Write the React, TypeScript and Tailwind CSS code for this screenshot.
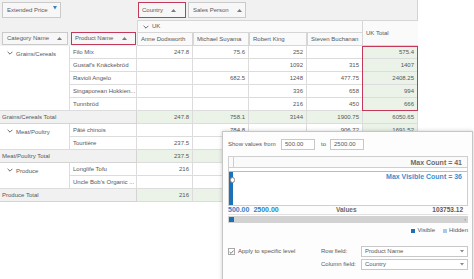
import React from "react";

type Group = {
  cat: string;
  items: string[][];
  total: string[];
};

const groups: Group[] = [
  {
    cat: "Grains/Cereals",
    items: [
      ["Filo Mix", "247.8", "75.6", "252", "", "575.4"],
      ["Gustaf's Knäckebröd", "", "", "1092", "315", "1407"],
      ["Ravioli Angelo", "", "682.5", "1248", "477.75", "2408.25"],
      ["Singaporean Hokkien...", "", "", "336", "658", "994"],
      ["Tunnbröd", "", "", "216", "450", "666"],
    ],
    total: ["Grains/Cereals Total", "247.8", "758.1", "3144", "1900.75", "6050.65"],
  },
  {
    cat: "Meat/Poultry",
    items: [
      ["Pâté chinois", "", "784.8", "", "906.72", "1691.52"],
      ["Tourtière", "237.5", "", "", "", ""],
    ],
    total: ["Meat/Poultry Total", "237.5", "", "", "", ""],
  },
  {
    cat: "Produce",
    items: [
      ["Longlife Tofu", "216", "", "", "", ""],
      ["Uncle Bob's Organic ...", "", "", "", "", ""],
    ],
    total: ["Produce Total", "216", "", "", "", ""],
  },
];

const spans: Record<number, string> = { 2: "row-span-2", 5: "row-span-5" };
const cols = "grid-cols-[70px_67px_56px_56px_58px_56px_55px]";

function Chevron() {
  return (
    <svg width="6" height="4" viewBox="0 0 6 4" className="shrink-0">
      <polyline points="0.6,0.8 3,3.2 5.4,0.8" fill="none" stroke="#6a6a6a" strokeWidth="1" />
    </svg>
  );
}

function SortUp() {
  return (
    <svg width="5" height="3" viewBox="0 0 5 3" className="shrink-0">
      <polygon points="0,3 2.5,0 5,3" fill="#7b7b7b" />
    </svg>
  );
}

function DropArrow() {
  return (
    <svg width="4" height="3" viewBox="0 0 4 3" className="shrink-0">
      <polygon points="0,0 4,0 2,2.5" fill="#888" />
    </svg>
  );
}

function Cell({ v, green }: { v: string; green?: boolean }) {
  return (
    <div
      className={`border-r border-b border-[#dcdcdc] pr-[3px] text-right leading-[12px] ${
        green ? "bg-[#ebf2e8]" : "bg-white"
      }`}
    >
      {v}
    </div>
  );
}

export default function App() {
  return (
    <div className="relative h-[279px] w-[474px] overflow-hidden bg-white font-['Liberation_Sans',Arial,sans-serif] text-[6px] text-[#575757]">
      {/* header block */}
      <div className={`grid w-[418px] ${cols} grid-rows-[20px_13px_13px] border-r border-[#d2d2d2] bg-[#f1f1f1]`}>
        <div className="col-start-1 col-end-3 row-start-1 flex items-start pl-[2px] pt-[2px]">
          <div className="flex h-[16px] w-[59px] items-center justify-between border border-[#cacaca] bg-[#f7f7f7] pl-[4px] pr-[3px]">
            <span>Extended Price</span>
            <svg width="4" height="4" viewBox="0 0 4 4" className="-mt-[5px]">
              <polygon points="0,0 4,0 2,3.5" fill="#3b7fc4" />
            </svg>
          </div>
        </div>
        <div className="col-start-3 col-end-8 row-start-1 flex items-start gap-[2px] pt-[2px] pl-[1px]">
          <div className="flex h-[16px] w-[48px] items-center gap-[8px] border-[1.5px] border-[#c4385a] bg-[#f7f7f7] pl-[3px]">
            <span>Country</span>
            <SortUp />
          </div>
          <div className="flex h-[16px] w-[58px] items-center gap-[8px] border border-[#cacaca] bg-[#f7f7f7] pl-[4px]">
            <span>Sales Person</span>
            <SortUp />
          </div>
        </div>
        <div className="col-start-3 col-end-7 row-start-2 flex items-center gap-[3px] border border-[#d6d6d6] bg-[#fafafa] pl-[5px]">
          <Chevron />
          <span>UK</span>
        </div>
        <div className="col-start-7 col-end-8 row-start-2 row-end-4 flex items-center border-t border-b border-[#d6d6d6] bg-[#fafafa] pl-[3px]">
          UK Total
        </div>
        <div className="col-start-1 row-start-3 flex items-start pl-[2px] -mt-[1px]">
          <div className="flex h-[13px] w-[66px] items-center gap-[8px] border border-[#cacaca] bg-[#f7f7f7] pl-[4px]">
            <span>Category Name</span>
            <SortUp />
          </div>
        </div>
        <div className="col-start-2 row-start-3 flex items-start pl-[1px] -mt-[1px]">
          <div className="flex h-[13px] w-[65px] items-center gap-[9px] border-[1.5px] border-[#c4385a] bg-[#f7f7f7] pl-[3px]">
            <span>Product Name</span>
            <SortUp />
          </div>
        </div>
        {["Anne Dodsworth", "Michael Suyama", "Robert King", "Steven Buchanan"].map((n) => (
          <div key={n} className="row-start-3 flex items-center border-r border-b border-l border-[#d6d6d6] bg-[#fafafa] pl-[3px]">
            {n}
          </div>
        ))}
      </div>

      {/* data block */}
      <div className="relative w-[418px]">
        <div className={`grid ${cols} auto-rows-[13px] border-r border-[#d2d2d2]`}>
          {groups.map((g) => (
            <React.Fragment key={g.cat}>
              <div className={`${spans[g.items.length]} flex items-start gap-[3px] border-r border-b border-[#dcdcdc] bg-white pl-[7px] pt-[4px]`}>
                <div className="pt-[1px]">
                  <Chevron />
                </div>
                <span>{g.cat}</span>
              </div>
              {g.items.map((r) => (
                <React.Fragment key={r[0]}>
                  <div className="overflow-hidden whitespace-nowrap border-r border-b border-[#dcdcdc] bg-white pl-[3px] leading-[12px]">
                    {r[0]}
                  </div>
                  {r.slice(1).map((v, i) => (
                    <Cell key={i} v={v} green={i === 4} />
                  ))}
                </React.Fragment>
              ))}
              <div className="col-span-2 border-b border-r border-[#d4d4d4] bg-[#f1f1f1] pl-[2px] leading-[12px]">
                {g.total[0]}
              </div>
              {g.total.slice(1).map((v, i) => (
                <Cell key={i} v={v} green />
              ))}
            </React.Fragment>
          ))}
        </div>
        <div className="pointer-events-none absolute left-[362px] top-0 h-[65px] w-[56px] border-[1.5px] border-[#c4385a]" />
      </div>

      {/* filter popup */}
      <div className="absolute left-[222px] top-[131px] flex h-[152px] w-[251px] flex-col border border-[#c6c6c6] bg-[#fdfdfd] pl-[5px] shadow-[0_0_4px_rgba(0,0,0,0.2)]">
        <div className="mt-[7px] flex items-center">
          <span className="w-[53px]">Show values from</span>
          <div className="flex h-[11px] w-[34px] items-center border border-[#c8c8c8] bg-white pl-[3px]">500.00</div>
          <span className="w-[15px] pl-[6px]">to</span>
          <div className="flex h-[11px] w-[34px] items-center border border-[#c8c8c8] bg-white pl-[3px]">2500.00</div>
        </div>

        <div className="mt-[6px] w-[240px] border border-[#cfcfcf] bg-white">
          <div className="flex h-[11px] border-b border-[#cfcfcf] bg-[#fafafa]">
            <div className="w-[5px] border-r border-[#cfcfcf]" />
            <div className="flex-1 pr-[5px] text-right text-[7px] font-bold leading-[11px] text-[#6a6a6a]">
              Max Count = 41
            </div>
          </div>
          <div className="relative h-[37px]">
            <div className="absolute left-0 right-0 top-[3px] border-t border-[#a6c2dc]" />
            <div className="absolute left-0 top-[4px] h-[33px] w-[4px] bg-[#1b72b8]" />
            <div className="absolute left-[1px] top-[9px] h-[6px] w-[5px] rounded-full border border-[#8a8a8a] bg-white" />
            <div className="pr-[5px] pt-[4px] text-right text-[7px] font-bold leading-[9px] text-[#3a8fd0]">
              Max Visible Count = 36
            </div>
          </div>
        </div>

        <div className="flex h-[9px] w-[240px] items-center border-b border-[#e2e2e2]">
          <div className="flex w-[108px] gap-[4px] text-[7px] font-bold text-[#2f84c6]">
            <span>500.00</span>
            <span>2500.00</span>
          </div>
          <span className="text-[6.5px] font-bold text-[#6a6a6a]">Values</span>
          <span className="flex-1 pr-[5px] text-right text-[6.5px] font-bold text-[#5a5a5a]">103753.12</span>
        </div>

        <div className="mt-[1px] flex h-[7px] w-[240px] items-center justify-between bg-[#d2d2d2] px-[1px]">
          <div className="h-[5px] w-[5px] bg-[#1c6fb2]" />
          <span className="pr-[1px] text-[5px] leading-[5px] text-[#888]">›</span>
        </div>

        <div className="mt-[3px] flex items-center justify-end gap-[2px] pr-[4px]">
          <div className="h-[4px] w-[4px] bg-[#1f6fb5]" />
          <span>Visible</span>
          <div className="ml-[6px] h-[4px] w-[4px] bg-[#a9c9e8]" />
          <span>Hidden</span>
        </div>

        <div className="mt-[11px] flex items-center">
          <div className="flex w-[93px] items-center gap-[3px]">
            <div className="flex h-[7px] w-[7px] items-center justify-center border border-[#a8a8a8] bg-white">
              <svg width="5" height="4" viewBox="0 0 5 4">
                <polyline points="0.5,2 2,3.4 4.5,0.6" fill="none" stroke="#555" strokeWidth="0.8" />
              </svg>
            </div>
            <span>Apply to specific level</span>
          </div>
          <span className="w-[40px]">Row field:</span>
          <div className="flex h-[11px] w-[107px] items-center justify-between border border-[#c8c8c8] bg-white pl-[3px] pr-[3px]">
            <span>Product Name</span>
            <DropArrow />
          </div>
        </div>
        <div className="mt-[2px] flex items-center">
          <div className="w-[93px]" />
          <span className="w-[40px]">Column field:</span>
          <div className="flex h-[11px] w-[107px] items-center justify-between border border-[#c8c8c8] bg-white pl-[3px] pr-[3px]">
            <span>Country</span>
            <DropArrow />
          </div>
        </div>
      </div>
    </div>
  );
}
